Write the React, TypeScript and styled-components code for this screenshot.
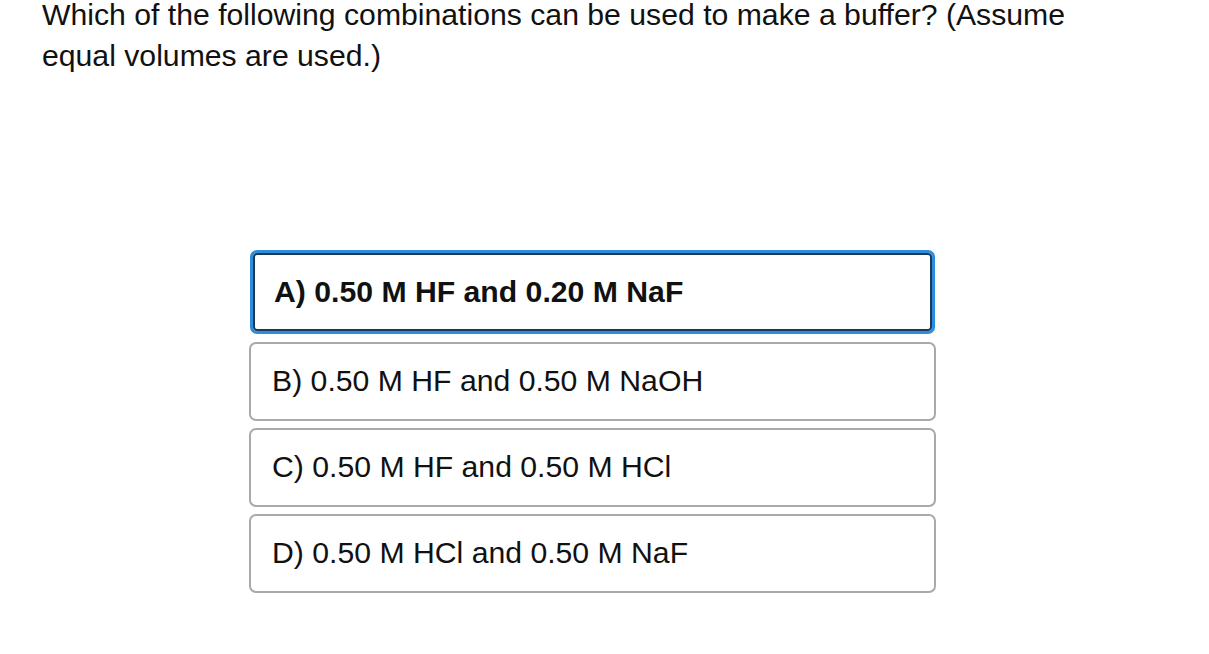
import React, { useState } from "react";
import styled, { createGlobalStyle, css } from "styled-components";

const GlobalStyle = createGlobalStyle`
  html, body {
    margin: 0;
    padding: 0;
    background: #ffffff;
    overflow: hidden;
  }
  body {
    font-family: "Liberation Sans", Arial, sans-serif;
    color: #111;
  }
`;

const options = [
  { key: "A", text: "0.50 M HF and 0.20 M NaF" },
  { key: "B", text: "0.50 M HF and 0.50 M NaOH" },
  { key: "C", text: "0.50 M HF and 0.50 M HCl" },
  { key: "D", text: "0.50 M HCl and 0.50 M NaF" },
];

const App = () => {
  const [selected, setSelected] = useState("A");

  return (
    <>
      <GlobalStyle />
      <Page>
        <Question>
          Which of the following combinations can be used to make a buffer?
          (Assume equal volumes are used.)
        </Question>

        <OptionList>
          {options.map((o) => (
            <Option
              key={o.key}
              type="button"
              $selected={selected === o.key}
              onClick={() => setSelected(o.key)}
            >
              {o.key}) {o.text}
            </Option>
          ))}
        </OptionList>
      </Page>
    </>
  );
};

// --- Styled Components ---

const Page = styled.main`
  display: flex;
  flex-direction: column;
  padding: 0 42px;
`;

const Question = styled.p`
  margin: -6px 0 0;
  max-width: 1040px;
  font-size: 30.2px;
  line-height: 41px;
  color: #111;
`;

const OptionList = styled.div`
  display: flex;
  flex-direction: column;
  gap: 7px;
  width: 687px;
  margin: 174px 0 0 207px;
`;

const Option = styled.button<{ $selected: boolean }>`
  display: flex;
  align-items: center;
  height: 79px;
  padding: 0 21px 2px;
  border: 2px solid #a9a9a9;
  border-radius: 7px;
  background: #ffffff;
  font-family: "Liberation Sans", Arial, sans-serif;
  font-size: 30.2px;
  font-weight: 400;
  color: #111;
  text-align: left;
  cursor: pointer;

  ${({ $selected }) =>
    $selected &&
    css`
      height: 84px;
      margin: 0 1px 1px;
      padding: 0 21px 1px;
      border: 3px solid #2b8ddc;
      box-shadow: inset 0 0 0 2px #1d3957;
      font-weight: 700;
    `}
`;

export default App;
